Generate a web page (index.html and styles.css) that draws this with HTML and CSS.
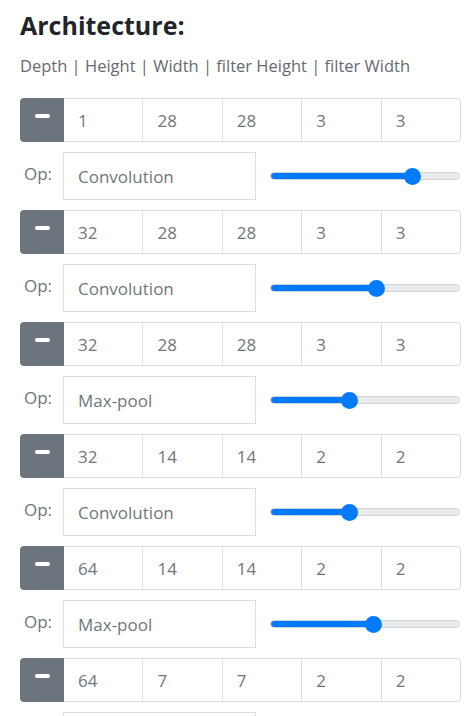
FILE: index.html
```html
<!DOCTYPE html>
<html>
<head>
<meta charset="utf-8">
<link rel="stylesheet" href="styles.css">
</head>
<body>
<div class="page">
  <h2 class="title">Architecture:</h2>
  <p class="legend">Depth | Height | Width | filter Height | filter Width</p>

  <div class="layer">
    <div class="group">
      <button class="minus"><span class="bar"></span></button>
      <input class="cell" value="1"><input class="cell" value="28"><input class="cell" value="28"><input class="cell" value="3"><input class="cell" value="3">
    </div>
    <div class="op">
      <span class="op-label">Op:</span>
      <input class="op-input" value="Convolution">
      <input type="range" class="slider" min="0" max="100" value="78" style="--p:78%">
    </div>
  </div>

  <div class="layer">
    <div class="group">
      <button class="minus"><span class="bar"></span></button>
      <input class="cell" value="32"><input class="cell" value="28"><input class="cell" value="28"><input class="cell" value="3"><input class="cell" value="3">
    </div>
    <div class="op">
      <span class="op-label">Op:</span>
      <input class="op-input" value="Convolution">
      <input type="range" class="slider" min="0" max="100" value="57" style="--p:57%">
    </div>
  </div>

  <div class="layer">
    <div class="group">
      <button class="minus"><span class="bar"></span></button>
      <input class="cell" value="32"><input class="cell" value="28"><input class="cell" value="28"><input class="cell" value="3"><input class="cell" value="3">
    </div>
    <div class="op">
      <span class="op-label">Op:</span>
      <input class="op-input" value="Max-pool">
      <input type="range" class="slider" min="0" max="100" value="41" style="--p:41%">
    </div>
  </div>

  <div class="layer">
    <div class="group">
      <button class="minus"><span class="bar"></span></button>
      <input class="cell" value="32"><input class="cell" value="14"><input class="cell" value="14"><input class="cell" value="2"><input class="cell" value="2">
    </div>
    <div class="op">
      <span class="op-label">Op:</span>
      <input class="op-input" value="Convolution">
      <input type="range" class="slider" min="0" max="100" value="41" style="--p:41%">
    </div>
  </div>

  <div class="layer">
    <div class="group">
      <button class="minus"><span class="bar"></span></button>
      <input class="cell" value="64"><input class="cell" value="14"><input class="cell" value="14"><input class="cell" value="2"><input class="cell" value="2">
    </div>
    <div class="op">
      <span class="op-label">Op:</span>
      <input class="op-input" value="Max-pool">
      <input type="range" class="slider" min="0" max="100" value="55" style="--p:55%">
    </div>
  </div>

  <div class="layer">
    <div class="group">
      <button class="minus"><span class="bar"></span></button>
      <input class="cell" value="64"><input class="cell" value="7"><input class="cell" value="7"><input class="cell" value="2"><input class="cell" value="2">
    </div>
    <div class="op">
      <span class="op-label">Op:</span>
      <input class="op-input" value="Convolution">
      <input type="range" class="slider" min="0" max="100" value="41" style="--p:41%">
    </div>
  </div>
</div>
</body>
</html>
```

FILE: styles.css
```css
html, body {
  margin: 0;
  padding: 0;
  background: #fff;
  overflow: hidden;
}
body {
  font-family: "Open Sans", "Noto Sans", sans-serif;
  color: #212529;
}
.page {
  padding: 8px 13px 0 20px;
}
.title {
  margin: 0;
  font-size: 25px;
  font-weight: 700;
  line-height: 34px;
  color: #212529;
}
.legend {
  margin: 12px 0 0 0;
  font-size: 16.5px;
  line-height: 24px;
  color: #666a6e;
  font-weight: 400;
}
.layer {
  display: flex;
  flex-direction: column;
  gap: 10px;
  margin-top: 10px;
}
.legend + .layer { margin-top: 20px; }
.group {
  display: flex;
  height: 44px;
}
.minus {
  width: 44px;
  height: 44px;
  flex: none;
  border: none;
  background: #6c757d;
  border-radius: 4px 0 0 4px;
  display: flex;
  align-items: center;
  justify-content: center;
  padding: 0;
  padding-bottom: 8px;
}
.bar {
  display: block;
  width: 15px;
  height: 4px;
  border-radius: 2px;
  background: #fff;
}
.cell {
  flex: 1 1 0;
  min-width: 0;
  height: 44px;
  box-sizing: border-box;
  border: 1px solid #dadde1;
  border-left: none;
  margin: 0;
  padding: 0 0 0 14px;
  font-family: "Open Sans", "Noto Sans", sans-serif;
  font-size: 17px;
  color: #70777d;
  background: #fff;
  outline: none;
}
.cell + .cell {
  border-left: 1px solid #dadde1;
  margin-left: -1px;
}
.cell:last-child {
  border-radius: 0 4px 4px 0;
}
.op {
  display: flex;
  align-items: center;
  height: 48px;
}
.op-label {
  width: 43px;
  font-size: 17px;
  color: #6c757d;
  padding-left: 4px;
  box-sizing: border-box;
  margin-top: -6px;
}
.op-input {
  width: 193px;
  height: 48px;
  box-sizing: border-box;
  border: 1px solid #dadde1;
  margin: 0;
  padding: 1px 0 0 14px;
  font-family: "Open Sans", "Noto Sans", sans-serif;
  font-size: 17px;
  color: #70777d;
  background: #fff;
  outline: none;
}
.slider {
  -webkit-appearance: none;
  appearance: none;
  margin: 0 0 0 14px;
  width: 190px;
  height: 8px;
  border-radius: 4px;
  border: 1px solid #d4d4d4;
  box-sizing: border-box;
  background: linear-gradient(to right, #007bff var(--p), #e9ecef var(--p));
  outline: none;
}
.slider::-webkit-slider-thumb {
  -webkit-appearance: none;
  appearance: none;
  width: 17px;
  height: 17px;
  border-radius: 50%;
  background: #007bff;
  border: none;
}
```
